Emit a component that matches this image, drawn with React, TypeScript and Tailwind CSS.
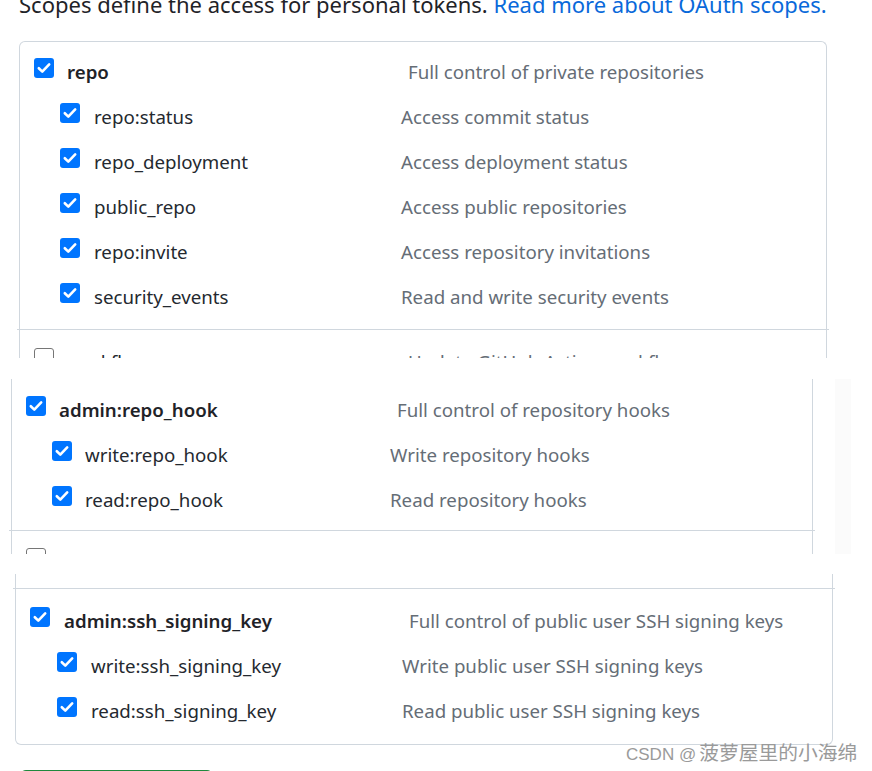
import React from "react";

const FONT = { fontFamily: '"Noto Sans", "Open Sans", "Liberation Sans", sans-serif' };

function Check({ checked }: { checked: boolean }) {
  if (!checked) {
    return (
      <div className="mb-[10px] h-[20px] w-[20px] shrink-0 rounded-[3px] border-[1.5px] border-[#767676] bg-white" />
    );
  }
  return (
    <div className="mb-[10px] flex h-[20px] w-[20px] shrink-0 items-center justify-center rounded-[3px] bg-[#0075ff]">
      <svg width="20" height="20" viewBox="0 0 20 20" fill="none">
        <path d="M4.8 10.2 L8.3 13.6 L15.2 6.4" stroke="white" strokeWidth="2.6" strokeLinecap="round" strokeLinejoin="round" />
      </svg>
    </div>
  );
}

type RowProps = {
  pl: string;
  gap: string;
  nameW: string;
  name: string;
  desc: string;
  bold?: boolean;
  checked?: boolean;
};

function Row({ pl, gap, nameW, name, desc, bold, checked = true }: RowProps) {
  return (
    <div className={`flex h-[45px] items-center ${pl}`}>
      <Check checked={checked} />
      <div
        className={`${gap} ${nameW} shrink-0 whitespace-nowrap text-[18.7px] ${
          bold ? "font-semibold text-[#1f2328]" : "text-[#24292f]"
        }`}
      >
        {name}
      </div>
      <div className="whitespace-nowrap text-[18.7px] text-[#656d76]">{desc}</div>
    </div>
  );
}

export default function App() {
  return (
    <div className="relative h-[771px] w-[872px] overflow-hidden bg-white" style={FONT}>
      {/* Segment 1 */}
      <div className="h-[358px] overflow-hidden">
        <div className="h-[19px] overflow-hidden pl-[19px]">
          <p className="-mt-[9px] whitespace-nowrap text-[22px] leading-[26px] text-[#1f2328]">
            Scopes define the access for personal tokens.{" "}
            <span className="text-[#0969da]">Read more about OAuth scopes.</span>
          </p>
        </div>
        <div className="ml-[19px] mt-[22px] w-[808px] rounded-t-[6px] border border-b-0 border-[#d0d7de] pt-[8px]">
          <Row pl="pl-[14px]" gap="ml-[13px]" nameW="w-[341px]" name="repo" desc="Full control of private repositories" bold />
          <Row pl="pl-[40px]" gap="ml-[14px]" nameW="w-[307px]" name="repo:status" desc="Access commit status" />
          <Row pl="pl-[40px]" gap="ml-[14px]" nameW="w-[307px]" name="repo_deployment" desc="Access deployment status" />
          <Row pl="pl-[40px]" gap="ml-[14px]" nameW="w-[307px]" name="public_repo" desc="Access public repositories" />
          <Row pl="pl-[40px]" gap="ml-[14px]" nameW="w-[307px]" name="repo:invite" desc="Access repository invitations" />
          <Row pl="pl-[40px]" gap="ml-[14px]" nameW="w-[307px]" name="security_events" desc="Read and write security events" />
          <div className="h-[9px]" />
          <div className="-mx-[3px] h-px bg-[#d0d7de]" />
          <div className="pt-[10px]">
            <Row pl="pl-[14px]" gap="ml-[13px]" nameW="w-[341px]" name="workflow" desc="Update GitHub Action workflows" checked={false} />
          </div>
        </div>
      </div>

      <div className="h-[21px]" />

      {/* Segment 2 */}
      <div className="flex h-[175px] overflow-hidden">
        <div className="ml-[11px] w-[802px] border-x border-[#d0d7de] pt-[9px]">
          <Row pl="pl-[14px]" gap="ml-[13px]" nameW="w-[338px]" name="admin:repo_hook" desc="Full control of repository hooks" bold />
          <Row pl="pl-[40px]" gap="ml-[13px]" nameW="w-[305px]" name="write:repo_hook" desc="Write repository hooks" />
          <Row pl="pl-[40px]" gap="ml-[13px]" nameW="w-[305px]" name="read:repo_hook" desc="Read repository hooks" />
          <div className="h-[7px]" />
          <div className="-mx-[3px] h-px bg-[#d0d7de]" />
          <div className="pt-[9px]">
            <Row pl="pl-[14px]" gap="ml-[13px]" nameW="w-[338px]" name="admin:org_hook" desc="Full control of organization hooks" checked={false} bold />
          </div>
        </div>
        <div className="ml-[22px] w-[16px] bg-[#fbfbfb]" />
      </div>

      <div className="h-[20px]" />

      {/* Segment 3 */}
      <div className="ml-[15px] w-[818px] rounded-b-[6px] border-x border-b border-[#d0d7de]">
        <div className="h-[14px]" />
        <div className="-mx-[3px] h-px bg-[#d0d7de]" />
        <div className="pt-[10px]">
          <Row pl="pl-[14px]" gap="ml-[14px]" nameW="w-[345px]" name="admin:ssh_signing_key" desc="Full control of public user SSH signing keys" bold />
          <Row pl="pl-[41px]" gap="ml-[14px]" nameW="w-[311px]" name="write:ssh_signing_key" desc="Write public user SSH signing keys" />
          <Row pl="pl-[41px]" gap="ml-[14px]" nameW="w-[311px]" name="read:ssh_signing_key" desc="Read public user SSH signing keys" />
        </div>
        <div className="h-[10px]" />
      </div>

      <div className="ml-[20px] mt-[25px] h-[32px] w-[193px] rounded-t-[6px] bg-[#1f883d]" />

      <div className="absolute left-[626px] top-[740px] flex items-baseline whitespace-nowrap text-[#9a9a9a]">
        <span className="text-[17px]" style={{ fontFamily: '"Liberation Sans", Arial, sans-serif' }}>
          CSDN @
        </span>
        <span
          className="ml-[3px] text-[19.75px] leading-[24px]"
          style={{ fontFamily: '"Noto Sans CJK SC", "Noto Sans", sans-serif' }}
        >
          菠萝屋里的小海绵
        </span>
      </div>
    </div>
  );
}
